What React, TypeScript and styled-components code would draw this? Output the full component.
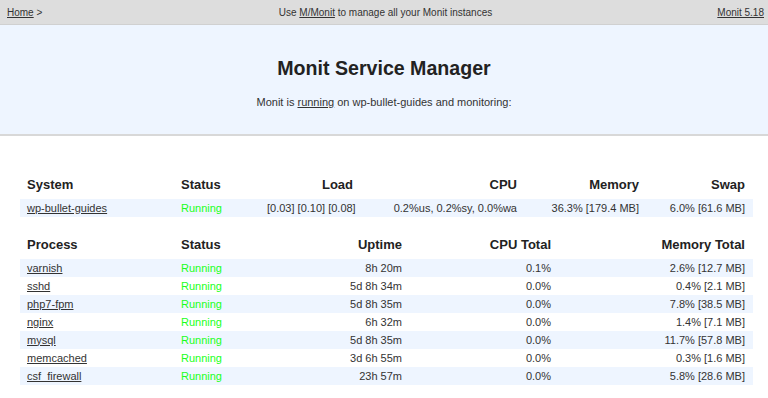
import React from "react";
import styled, {createGlobalStyle} from "styled-components";

const GlobalStyle = createGlobalStyle`
  html, body {
    margin: 0;
    padding: 0;
    background: #fff;
    font-family: "Liberation Sans", Arial, sans-serif;
    color: #333;
  }
`;

interface ICol {
    w: number;
}

const systemCols: ICol[] = [
    {w: 154}, {w: 86}, {w: 101}, {w: 164}, {w: 122}, {w: 106}
];

const processCols: ICol[] = [
    {w: 154}, {w: 86}, {w: 150}, {w: 149}, {w: 194}
];

const processes = [
    ['varnish', '8h 20m', '0.1%', '2.6% [12.7 MB]'],
    ['sshd', '5d 8h 34m', '0.0%', '0.4% [2.1 MB]'],
    ['php7-fpm', '5d 8h 35m', '0.0%', '7.8% [38.5 MB]'],
    ['nginx', '6h 32m', '0.0%', '1.4% [7.1 MB]'],
    ['mysql', '5d 8h 35m', '0.0%', '11.7% [57.8 MB]'],
    ['memcached', '3d 6h 55m', '0.0%', '0.3% [1.6 MB]'],
    ['csf_firewall', '23h 57m', '0.0%', '5.8% [28.6 MB]'],
];

const App = () => {
    return (
        <>
            <GlobalStyle/>
            <Nav>
                <NavLeft><Link href="#">Home</Link> &gt;</NavLeft>
                <NavCenter>Use <Link href="#">M/Monit</Link> to manage all your Monit instances</NavCenter>
                <NavRight><Link href="#">Monit 5.18</Link></NavRight>
            </Nav>
            <Header>
                <Title>Monit Service Manager</Title>
                <Subtitle>Monit is <Link href="#">running</Link> on wp-bullet-guides and monitoring:</Subtitle>
            </Header>
            <Main>
                <Table>
                    <colgroup>
                        {systemCols.map((c, i) => <col key={i} style={{width: c.w}}/>)}
                    </colgroup>
                    <thead>
                    <tr>
                        <Th>System</Th>
                        <Th>Status</Th>
                        <Th $right>Load</Th>
                        <Th $right>CPU</Th>
                        <Th $right>Memory</Th>
                        <Th $right>Swap</Th>
                    </tr>
                    </thead>
                    <tbody>
                    <Row $stripe>
                        <Td><Link href="#">wp-bullet-guides</Link></Td>
                        <Td><Ok>Running</Ok></Td>
                        <Td $right>[0.03]&nbsp;[0.10]&nbsp;[0.08]</Td>
                        <Td $right>0.2%us,&nbsp;0.2%sy,&nbsp;0.0%wa</Td>
                        <Td $right>36.3% [179.4 MB]</Td>
                        <Td $right>6.0% [61.6 MB]</Td>
                    </Row>
                    </tbody>
                </Table>

                <Table>
                    <colgroup>
                        {processCols.map((c, i) => <col key={i} style={{width: c.w}}/>)}
                    </colgroup>
                    <thead>
                    <tr>
                        <Th>Process</Th>
                        <Th>Status</Th>
                        <Th $right>Uptime</Th>
                        <Th $right>CPU Total</Th>
                        <Th $right>Memory Total</Th>
                    </tr>
                    </thead>
                    <tbody>
                    {processes.map((p, i) => (
                        <Row key={p[0]} $stripe={i % 2 === 0}>
                            <Td><Link href="#">{p[0]}</Link></Td>
                            <Td><Ok>Running</Ok></Td>
                            <Td $right>{p[1]}</Td>
                            <Td $right>{p[2]}</Td>
                            <Td $right>{p[3]}</Td>
                        </Row>
                    ))}
                    </tbody>
                </Table>
            </Main>
        </>
    )
}

export default App;

const Nav = styled.div`
  display: grid;
  grid-template-columns: 1fr auto 1fr;
  align-items: center;
  height: 24px;
  padding: 0 4px 0 7px;
  background: #dddddd;
  border-bottom: 1px solid #d0d0d0;
  font-size: 10px;
  color: #333;
`;

const NavLeft = styled.div`
  text-align: left;
`;

const NavCenter = styled.div`
  text-align: center;
`;

const NavRight = styled.div`
  text-align: right;
`;

const Link = styled.a`
  color: #333;
  text-decoration: underline;
`;

const Header = styled.div`
  background: #eef5ff;
  border-bottom: 2px solid #d8d8d8;
  height: 111px;
  box-sizing: border-box;
  padding-top: 31px;
  text-align: center;
`;

const Title = styled.h1`
  margin: 0;
  font-size: 19.6px;
  line-height: 24px;
  font-weight: bold;
  color: #222;
`;

const Subtitle = styled.p`
  margin: 16px 0 0;
  font-size: 11px;
  line-height: 13px;
  color: #333;
`;

const Main = styled.div`
  width: 733px;
  margin: 39px 0 0 20px;
`;

const Table = styled.table`
  width: 733px;
  table-layout: fixed;
  border-collapse: collapse;
  margin-bottom: 18px;
`;

const Th = styled.th<{ $right?: boolean }>`
  text-align: ${p => p.$right ? 'right' : 'left'};
  font-size: 13px;
  line-height: 15px;
  font-weight: bold;
  color: #222;
  padding: 2px 8px 7px 7px;
  white-space: nowrap;
`;

const Row = styled.tr<{ $stripe?: boolean }>`
  background: ${p => p.$stripe ? '#eef5ff' : '#fff'};
`;

const Td = styled.td<{ $right?: boolean }>`
  text-align: ${p => p.$right ? 'right' : 'left'};
  font-size: 11px;
  height: 18px;
  line-height: 13px;
  padding: 0 8px 0 7px;
  white-space: nowrap;
  color: #333;
`;

const Ok = styled.span`
  color: #19ff19;
`;
